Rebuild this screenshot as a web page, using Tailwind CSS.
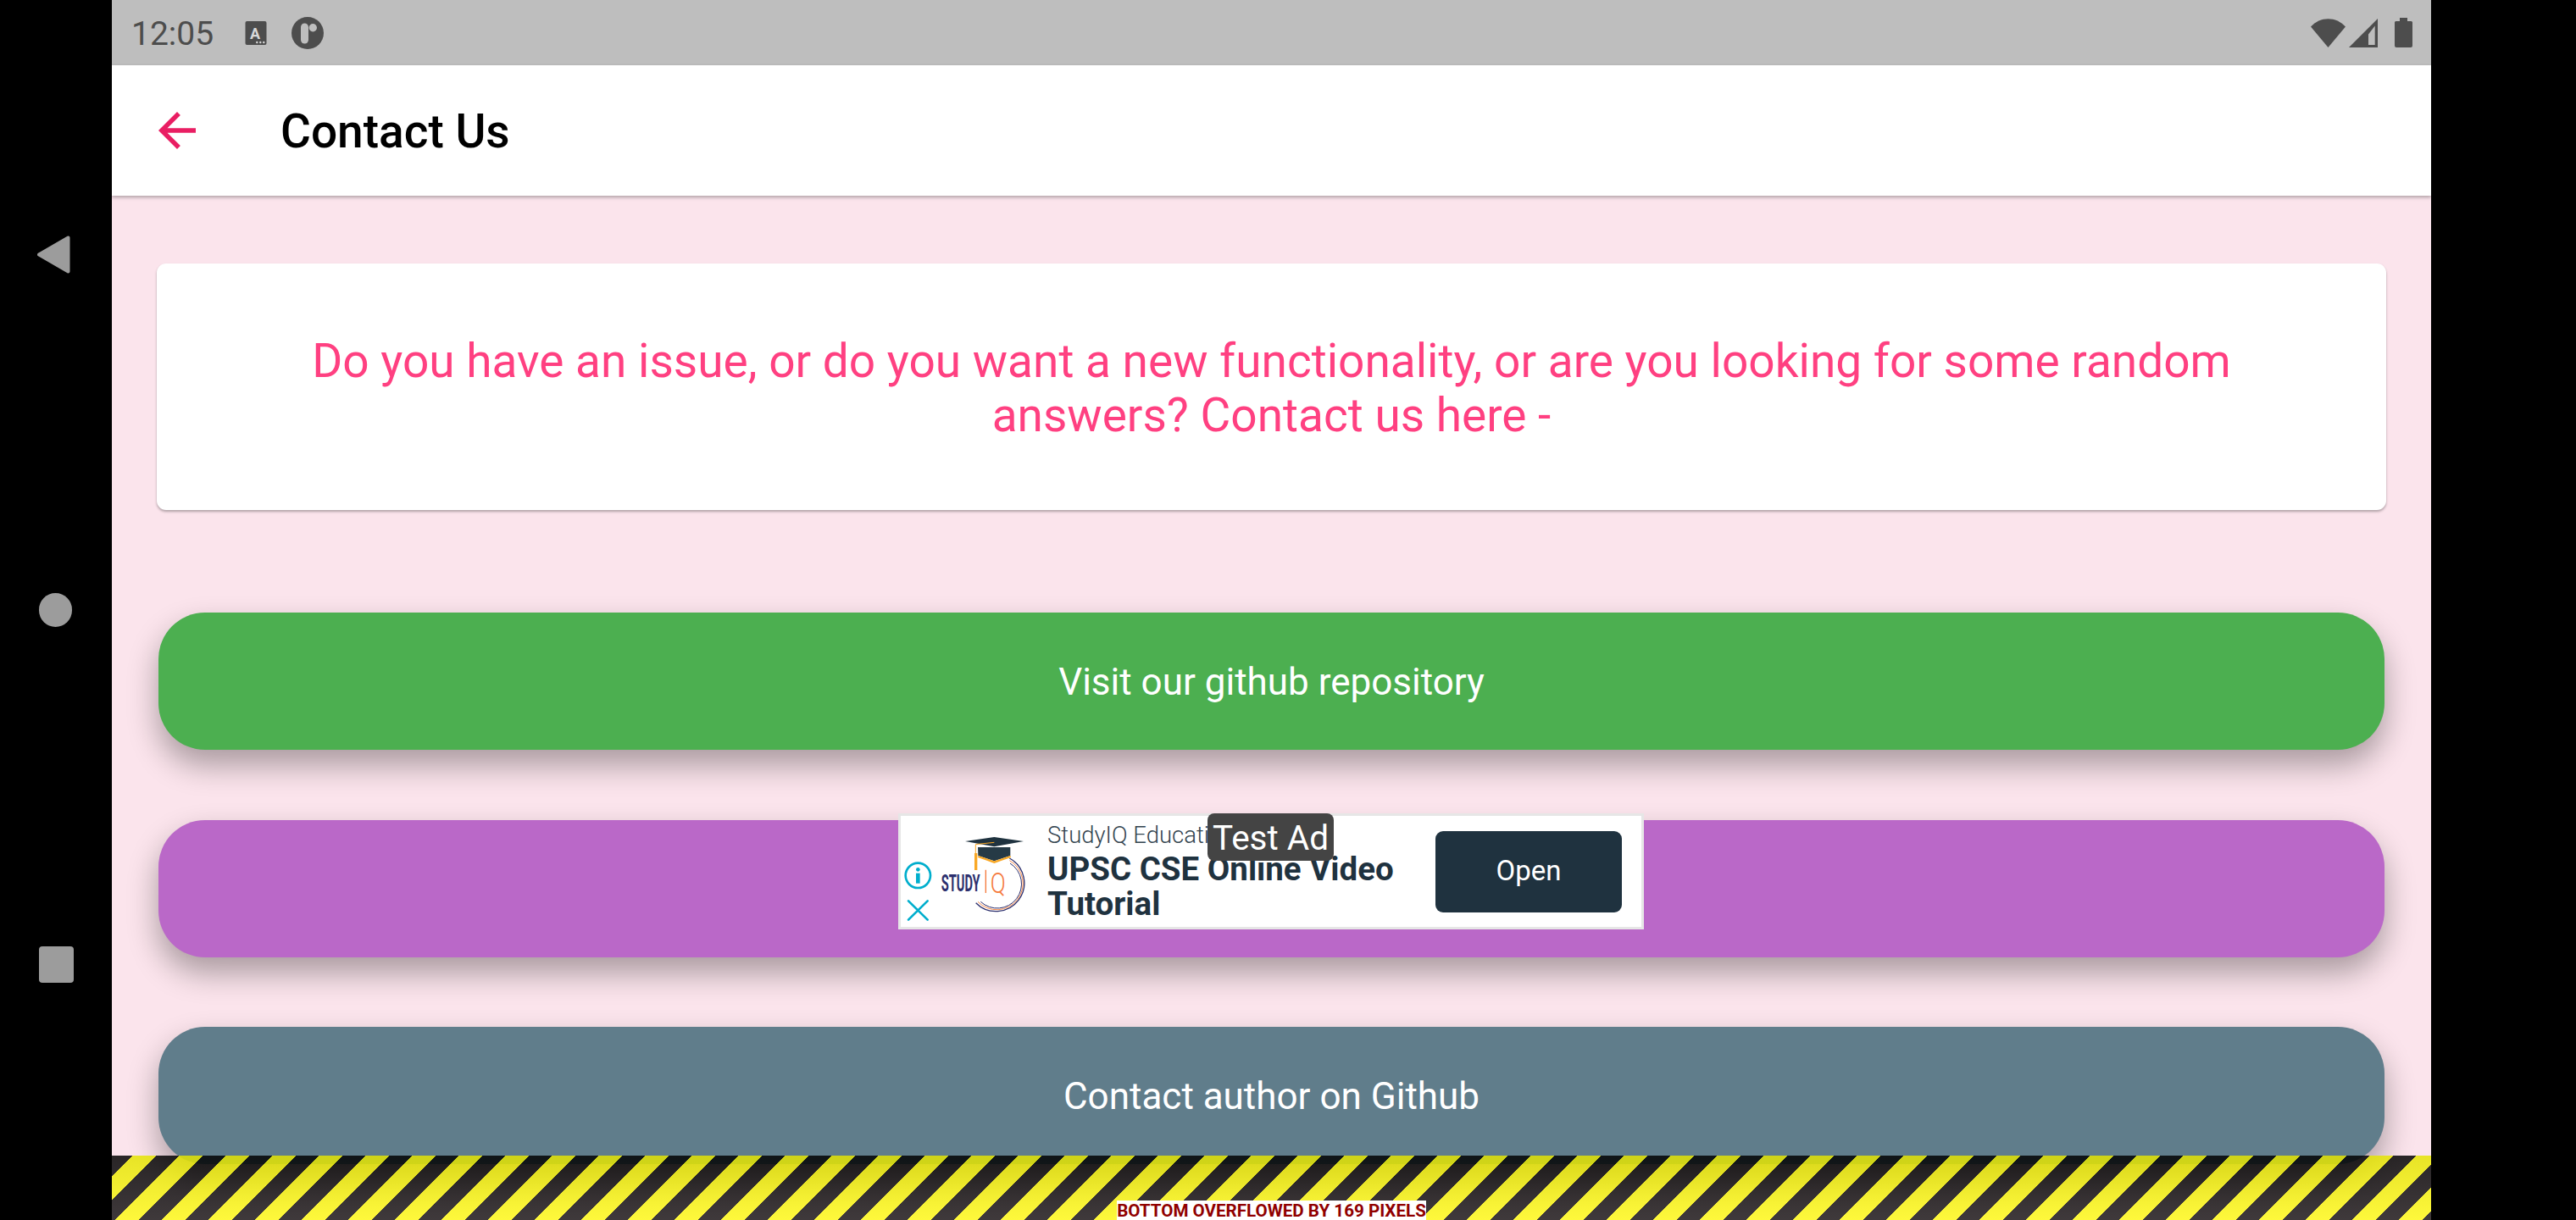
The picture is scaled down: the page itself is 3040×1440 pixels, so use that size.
<!DOCTYPE html>
<html lang="en">
  <head>
    <meta charset="UTF-8" />
    <title>Contact Us</title>
    <script src="https://cdn.jsdelivr.net/npm/@tailwindcss/browser@4"></script>
  </head>
  <body class="bg-black font-['Roboto',sans-serif]">
    <div class="flex w-[3040px] h-[1440px] overflow-hidden bg-black">
      <!-- Emulator nav rail -->
      <div class="w-[132px] shrink-0 pt-[278px] pl-[44px] flex flex-col gap-[377px]">
        <svg class="w-[39px] h-[45px]" viewBox="0 0 39 45">
          <path d="M2 22.500 36.500 2.500V42.500Z" fill="#9c9c9c" stroke="#9c9c9c" stroke-width="4" stroke-linejoin="round" />
        </svg>
        <div class="ml-[2px] w-[39px] h-[40px] rounded-full bg-[#9c9c9c]"></div>
        <div class="ml-[2px] w-[41px] h-[43px] rounded-[4px] bg-[#9c9c9c]"></div>
      </div>

      <div class="relative w-[2737px] h-[1440px] shrink-0 bg-[#fbe4ec] overflow-hidden">
        <!-- Status bar -->
        <div class="flex items-center h-[77px] bg-[#bebebe] text-[#4d4d4d]">
          <span class="ml-[23px] pt-[3px] text-[39px] leading-none">12:05</span>
          <svg class="ml-[37px] w-[26px] h-[28px]" viewBox="0 0 26 28">
            <rect x="0.500" width="25" height="28" rx="2" fill="#4d4d4d" />
            <text x="12" y="21" text-anchor="middle" font-size="18" font-weight="700" fill="#d8d8d8">A</text>
            <circle cx="14.300" cy="25" r="1.200" fill="#d8d8d8" />
            <circle cx="18.300" cy="25" r="1.200" fill="#d8d8d8" />
            <circle cx="22.300" cy="25" r="1.200" fill="#d8d8d8" />
          </svg>
          <svg class="ml-[29px] w-[38px] h-[38px]" viewBox="0 0 38 38">
            <circle cx="19" cy="19" r="19" fill="#4d4d4d" />
            <rect x="11" y="7.500" width="9" height="24" rx="4.500" fill="#bebebe" />
            <circle cx="25.300" cy="12.700" r="4.700" fill="#bebebe" />
          </svg>
          <div class="ml-auto mr-[22px] flex items-center">
            <svg class="w-[41px] h-[34px]" viewBox="0 0 41 34">
              <path d="M0 9.500C11 -3 30 -3 41 9.500L20.500 34Z" fill="#4d4d4d" />
            </svg>
            <svg class="ml-[4px] w-[34px] h-[34px]" viewBox="0 0 34 34">
              <path fill-rule="evenodd" d="M0 34 34 0V34ZM23 18.500V31H30.700V8.500Z" fill="#4d4d4d" />
            </svg>
            <svg class="ml-[20px] w-[21px] h-[35px]" viewBox="0 0 21 35">
              <path d="M6 0H15V4H19.500A1.500 1.500 0 0 1 21 5.500V33A2 2 0 0 1 19 35H2A2 2 0 0 1 0 33V5.500A1.500 1.500 0 0 1 1.500 4H6Z" fill="#4d4d4d" />
            </svg>
          </div>
        </div>

        <!-- App bar -->
        <div class="relative flex items-center h-[154px] pl-[44px] bg-white shadow-[0_2px_4px_rgba(0,0,0,0.3)]">
          <svg class="w-[66px] h-[66px]" viewBox="0 0 24 24" fill="#e91e63">
            <path d="M20 11H7.830l5.590-5.590L12 4l-8 8 8 8 1.410-1.410L7.830 13H20v-2z" />
          </svg>
          <h1 class="ml-[89px] pt-[3px] text-[55px] font-medium text-black">Contact Us</h1>
        </div>

        <!-- Intro card -->
        <div class="mx-[53px] mt-[80px] h-[291px] flex items-center justify-center pt-[2px] px-[150px] bg-white rounded-[11px] shadow-[0_2px_3px_rgba(0,0,0,0.3)]">
          <p class="text-center text-[55px] leading-[64px] text-[#ff4081]">Do you have an issue, or do you want a new functionality, or are you looking for some random answers? Contact us here -</p>
        </div>

        <!-- Buttons -->
        <div class="mx-[55px] mt-[121px] flex flex-col gap-[83px]">
          <div class="h-[162px] flex items-center justify-center pt-[1px] rounded-[55px] bg-[#4caf50] text-white text-[44px] shadow-[0_18px_36px_rgba(0,0,0,0.33)]">Visit our github repository</div>
          <div class="h-[162px] rounded-[55px] bg-[#ba68c8] shadow-[0_18px_36px_rgba(0,0,0,0.33)]"></div>
          <div class="h-[162px] -mt-[1px] flex items-center justify-center pt-[1px] rounded-[55px] bg-[#607d8b] text-white text-[44px] shadow-[0_18px_36px_rgba(0,0,0,0.33)]">Contact author on Github</div>
        </div>

        <!-- Test ad banner -->
        <div class="absolute left-[928px] top-[960px] w-[880px] h-[137px] bg-white border-[3px] border-[#e6e6e6]">
          <svg class="absolute -left-[3px] -top-[8px] w-[200px] h-[145px]" viewBox="0 0 600 435" fill="none">
            <circle cx="70" cy="235" r="44" stroke="#00aecd" stroke-width="8" />
            <circle cx="70" cy="214" r="7" fill="#00aecd" />
            <rect x="63" y="227" width="14" height="36" fill="#00aecd" />
            <path d="M36 325 104 392M104 325 36 392" stroke="#00aecd" stroke-width="8" stroke-linecap="round" />
            <path d="M394 174A100 100 0 1 1 275 332" stroke="#2c2f6d" stroke-width="4" />
            <path d="M394 182A93 93 0 1 1 282 328" stroke="#f58a4b" stroke-width="3" />
            <path d="M396 192A86 86 0 1 1 292 328" stroke="#2c2f6d" stroke-width="3" />
            <path d="M282 135H397V165L340 184 283 165Z" fill="#263a46" />
            <path d="M237 114 340 99 444 114 340 133Z" fill="#1f323f" />
            <path d="M283 168 340 188 398 168" stroke="#f9a825" stroke-width="7" />
            <path d="M340 118 274 125V160" stroke="#f9a825" stroke-width="3" />
            <rect x="270" y="156" width="10" height="60" fill="#f9a825" />
            <text x="152" y="290" font-size="84" font-weight="700" fill="#2c2f6d" textLength="138" lengthAdjust="spacingAndGlyphs">STUDY</text>
            <path d="M310 215V297" stroke="#f57a3d" stroke-width="4" />
            <text x="326" y="297" font-size="100" font-weight="300" fill="#f57a3d" textLength="54" lengthAdjust="spacingAndGlyphs">Q</text>
          </svg>
          <div class="absolute left-[173px] top-[5px] flex flex-col text-[#1f323f]">
            <span class="text-[27.500px] leading-[36px] font-light text-[#33444f]">StudyIQ Education</span>
            <span class="w-[420px] mt-[1px] text-[38.500px] leading-[41px] font-bold">UPSC CSE Online Video Tutorial</span>
          </div>
          <div class="absolute left-[631px] top-[18px] w-[220px] h-[96px] flex items-center justify-center pb-[2px] rounded-[9px] bg-[#1f323f] text-white text-[33px]">Open</div>
          <div class="absolute left-[362px] -top-[3px] w-[149px] h-[56px] flex items-center justify-center pt-[3px] rounded-[8px] bg-[#444444] text-white text-[40.500px]">Test Ad</div>
        </div>

        <!-- Overflow warning band -->
        <div class="absolute left-0 right-0 bottom-0 h-[76px] flex items-end justify-center">
          <div class="absolute inset-0 bg-linear-to-b from-black/35 to-transparent"></div>
          <div class="absolute inset-0 bg-[repeating-linear-gradient(135deg,rgba(0,0,0,0.75)_0,rgba(0,0,0,0.75)_17.300px,rgba(255,255,0,0.75)_17.300px,rgba(255,255,0,0.75)_36.800px,rgba(0,0,0,0.75)_36.800px,rgba(0,0,0,0.75)_38.891px)]"></div>
          <span class="relative h-[23px] w-[365px] bg-white text-center text-[20.600px] leading-[25px] font-bold text-[#900000] whitespace-nowrap">BOTTOM OVERFLOWED BY 169 PIXELS</span>
        </div>
      </div>

      <div class="flex-1 bg-black"></div>
    </div>
  </body>
</html>
